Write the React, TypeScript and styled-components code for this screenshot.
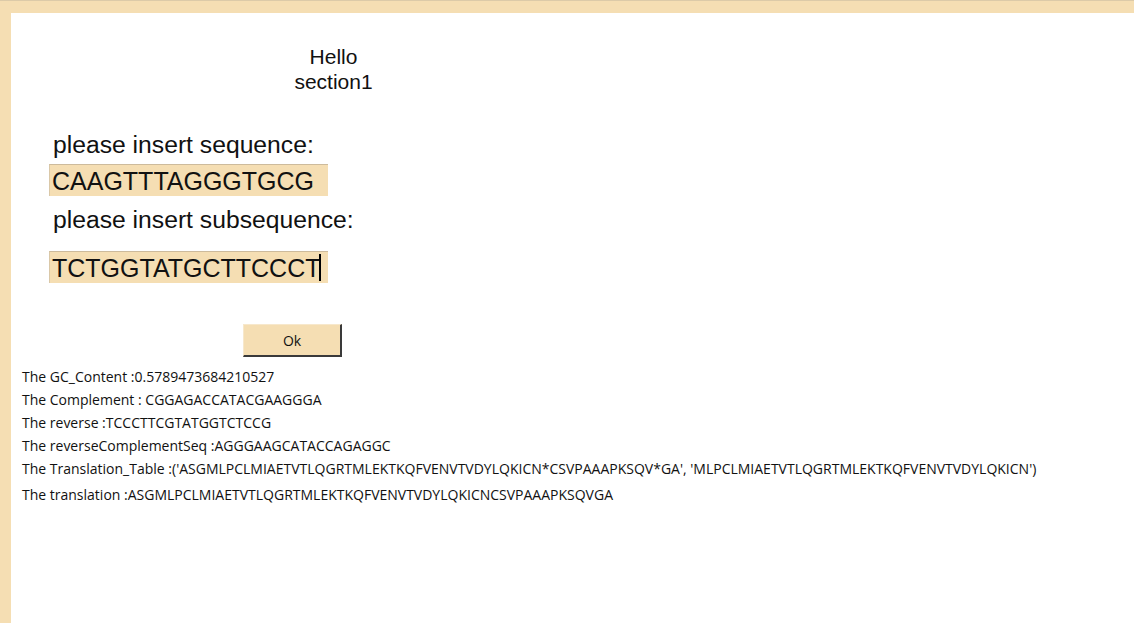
import React from "react";
import styled, { createGlobalStyle } from "styled-components";

const Global = createGlobalStyle`
  html, body {
    margin: 0;
    padding: 0;
    background: #f5deb3;
  }
  body {
    border-top: 1px solid #dccaa8;
    padding: 12px 0 0 11px;
    box-sizing: border-box;
    height: 623px;
    overflow: hidden;
  }
  #root { height: 100%; }
`;

const Panel = styled.main`
  background: #ffffff;
  height: 100%;
  padding: 31px 0 0 0;
  box-sizing: border-box;
  font-family: "Liberation Sans", Arial, sans-serif;
  color: #111;
`;

const Heading = styled.h1`
  margin: 0;
  width: 645px;
  text-align: center;
  font-size: 21px;
  line-height: 25px;
  font-weight: normal;
`;

const Form = styled.form`
  display: flex;
  flex-direction: column;
  align-items: flex-start;
  padding: 37px 0 0 38px;
`;

const Label = styled.label<{ $gap: number }>`
  display: block;
  font-size: 24.7px;
  line-height: 28px;
  padding-left: 4px;
  margin-top: ${(p) => p.$gap}px;
`;

const Field = styled.div<{ $gap: number }>`
  display: flex;
  align-items: center;
  width: 279px;
  height: 32px;
  box-sizing: border-box;
  margin-top: ${(p) => p.$gap}px;
  padding-left: 2px;
  background: #f5deb3;
  border-top: 1px solid #cdbb9c;
  border-left: 1px solid #dac8a8;
  font-size: 25px;
  line-height: 32px;
  color: #111;
  white-space: nowrap;
`;

const Caret = styled.span`
  display: inline-block;
  width: 2px;
  height: 27px;
  background: #000;
  margin-left: -1px;
`;

const ButtonRow = styled.div`
  padding: 41px 0 0 232px;
`;

const OkButton = styled.button`
  width: 99px;
  height: 33px;
  box-sizing: border-box;
  background: #f5deb3;
  border-top: 1px solid #f7e8cc;
  border-left: 1px solid #f7e8cc;
  border-right: 2px solid #3a3a3a;
  border-bottom: 2px solid #3a3a3a;
  font-family: "Open Sans", "Noto Sans", sans-serif;
  font-size: 14px;
  color: #111;
  padding: 0;
`;

const Results = styled.div`
  display: flex;
  flex-direction: column;
  padding: 8px 0 0 11px;
  font-family: "Open Sans", "Noto Sans", sans-serif;
  font-size: 14px;
  color: #111;
`;

const Line = styled.div<{ $gap?: number }>`
  line-height: 23px;
  white-space: nowrap;
  margin-top: ${(p) => p.$gap ?? 0}px;
`;

const results: { text: string; gap?: number }[] = [
  { text: "The GC_Content :0.5789473684210527" },
  { text: "The Complement : CGGAGACCATACGAAGGGA" },
  { text: "The reverse :TCCCTTCGTATGGTCTCCG" },
  { text: "The reverseComplementSeq :AGGGAAGCATACCAGAGGC" },
  {
    text:
      "The Translation_Table :('ASGMLPCLMIAETVTLQGRTMLEKTKQFVENVTVDYLQKICN*CSVPAAAPKSQV*GA', 'MLPCLMIAETVTLQGRTMLEKTKQFVENVTVDYLQKICN')",
  },
  {
    text: "The translation :ASGMLPCLMIAETVTLQGRTMLEKTKQFVENVTVDYLQKICNCSVPAAAPKSQVGA",
    gap: 3,
  },
];

export default function App() {
  return (
    <>
      <Global />
      <Panel>
        <Heading>
          Hello
          <br />
          section1
        </Heading>
        <Form onSubmit={(e) => e.preventDefault()}>
          <Label $gap={0}>please insert sequence:</Label>
          <Field $gap={5}>CAAGTTTAGGGTGCG</Field>
          <Label $gap={10}>please insert subsequence:</Label>
          <Field $gap={17}>
            TCTGGTATGCTTCCCT
            <Caret />
          </Field>
        </Form>
        <ButtonRow>
          <OkButton type="button">Ok</OkButton>
        </ButtonRow>
        <Results>
          {results.map((r) => (
            <Line key={r.text} $gap={r.gap}>
              {r.text}
            </Line>
          ))}
        </Results>
      </Panel>
    </>
  );
}
